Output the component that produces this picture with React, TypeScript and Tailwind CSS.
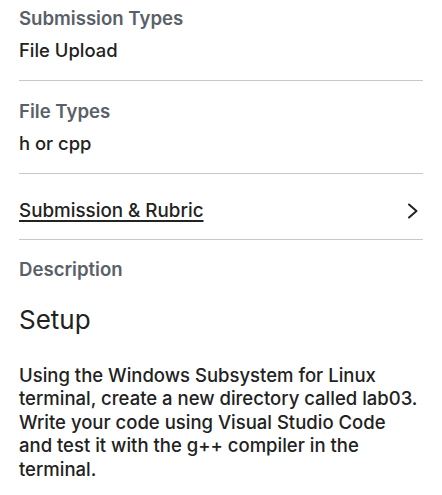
function Field({ label, value }: { label: string; value: string }) {
  return (
    <div className="border-b border-[#c8c8cc]">
      <div className="pt-[19px] pb-[18px]">
        <div className="text-[18.6px] leading-[22px] font-semibold text-[#5a6069]">{label}</div>
        <div className="mt-[9px] text-[18.4px] leading-[24px] font-medium text-[#222222]">{value}</div>
      </div>
    </div>
  );
}

function Chevron() {
  return (
    <svg width="12" height="16" viewBox="0 0 12 16" fill="none" className="mr-[4px]">
      <polyline
        points="2,1.5 9.5,8 2,14.5"
        stroke="#222222"
        strokeWidth="2"
        strokeLinecap="round"
        strokeLinejoin="round"
      />
    </svg>
  );
}

export default function App() {
  return (
    <div
      className="min-h-screen bg-white px-[19px]"
      style={{ fontFamily: "Inter, 'Noto Sans', sans-serif" }}
    >
      <div className="-mt-[12px]">
        <Field label="Submission Types" value="File Upload" />
      </div>
      <Field label="File Types" value="h or cpp" />

      <div className="flex items-center justify-between border-b border-[#c8c8cc] pt-[25px] pb-[16px]">
        <span className="text-[18.8px] leading-[24px] font-medium text-[#222222] underline underline-offset-[3px] decoration-[1.5px]">
          Submission &amp; Rubric
        </span>
        <Chevron />
      </div>

      <div className="pt-[18px]">
        <div className="text-[18.6px] leading-[22px] font-semibold text-[#5a6069]">Description</div>
        <h2 className="mt-[23px] text-[26px] leading-[34px] font-normal text-[#222222]">Setup</h2>
        <p className="mt-[27px] text-[18.5px] leading-[23.4px] font-medium text-[#222222]">
          Using the Windows Subsystem for Linux terminal, create a new directory called lab03.
          Write your code using Visual Studio Code and test it with the g++ compiler in the
          terminal.
        </p>
      </div>
    </div>
  );
}
